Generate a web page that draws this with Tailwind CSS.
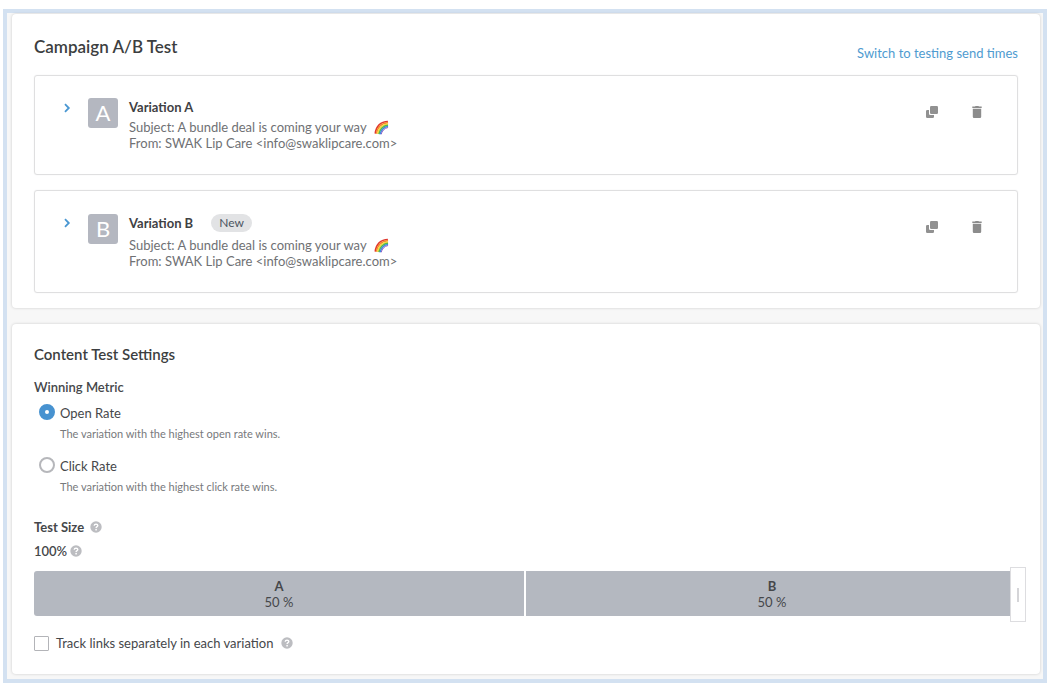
<!DOCTYPE html>
<html lang="en">
<head>
<meta charset="utf-8">
<meta name="viewport" content="width=device-width, initial-scale=1">
<title>Campaign A/B Test</title>
<script src="https://cdn.jsdelivr.net/npm/@tailwindcss/browser@4"></script>
</head>
<body class="bg-white font-['Lato',sans-serif] text-[13px] leading-4 text-[#6f7174]">
<svg class="hidden" aria-hidden="true">
  <symbol id="chevron" viewBox="0 0 8 10"><path d="M2 1.2 5.8 5 2 8.800" fill="none" stroke="#4a97d2" stroke-width="1.8"/></symbol>
  <symbol id="copy" viewBox="0 0 12 12"><rect x="4" y="0" width="8" height="8" rx="1.2" fill="#919191"/><path d="M3 4H1.200Q0 4 0 5.200V10.800Q0 12 1.200 12H6.800Q8 12 8 10.800V9H4.200Q3 9 3 7.800Z" fill="#919191"/></symbol>
  <symbol id="trash" viewBox="0 0 10 12"><path d="M0.300 .6H3L3.600 0H6.400L7 .6H9.700V1.900H.3ZM.8 2.800H9.200V10.800Q9.200 12 8 12H2Q.8 12 .8 10.800Z" fill="#8c8c8c"/></symbol>
  <symbol id="help" viewBox="0 0 12 12"><circle cx="6" cy="6" r="5.700" fill="#bcbdc1"/><path d="M4.200 4.700Q4.300 3.100 6 3.100 7.800 3.200 7.800 4.600 7.800 5.400 6.800 5.900 6.100 6.300 6.100 7" fill="none" stroke="#fff" stroke-width="1.400"/><circle cx="6.100" cy="8.700" r=".85" fill="#fff"/></symbol>
  <symbol id="rainbow" viewBox="0 0 16 16">
    <g fill="none" stroke-width="1.600">
      <path d="M1.300 14.500C2 7 7 1.500 14.800 1.500" stroke="#e0392f"/>
      <path d="M2.700 14.700C3.300 8 8 3 15 2.900" stroke="#f58a2b"/>
      <path d="M4 14.900C4.600 9 9 4.400 15 4.200" stroke="#f8d93c"/>
      <path d="M5.300 15C6 10 9.800 5.800 15 5.500" stroke="#55b947"/>
      <path d="M6.600 15.200C7.200 11 10.600 7.200 15 6.800" stroke="#3b8de0"/>
      <path d="M7.700 15.300C8.200 12 11.200 8.500 15 8" stroke="#8a54c0" stroke-width="1"/>
    </g>
  </symbol>
</svg>
<div class="mt-[9px] mr-[5px] mb-1 ml-[3px] border-4 border-[#d3e1f1] bg-[#f7f7f7] pt-px pr-[3px] pb-[5px] pl-[5px]">
  <main class="flex flex-col gap-4">
    <section class="rounded-sm bg-white px-[22px] pt-6 pb-[15px] shadow-[0_0_3px_rgba(0,0,0,0.18)]" aria-labelledby="campaign-title">
      <header class="flex h-[37px] justify-between">
        <h1 id="campaign-title" class="text-[17px] leading-[18px] font-semibold text-[#3c3e40]">Campaign A/B Test</h1>
        <a href="#" class="pt-[7px] text-[#4f9bd0]">Switch to testing send times</a>
      </header>
      <div class="flex flex-col gap-[15px]">
        <article class="flex h-[100px] items-start rounded-[3px] border border-[#dfdfe0] pt-[22px] pr-[35px] pl-7 shadow-[0_0_1px_#dfdfe0]">
          <button type="button" aria-label="Expand Variation A" class="mt-[5px] mr-[17px]"><svg class="h-[10px] w-2"><use href="#chevron"/></svg></button>
          <span class="mr-[11px] flex size-[30px] items-center justify-center rounded-[3px] bg-[#b4b7c0] text-[22px] leading-[30px] text-white">A</span>
          <div class="flex-1">
            <h2 class="mb-[3px] leading-[18px] font-bold text-[#3f4144]">Variation A</h2>
            <p class="flex items-center gap-[7px]">Subject: A bundle deal is coming your way <svg class="size-[15px]" role="img" aria-label="Rainbow"><use href="#rainbow"/></svg></p>
            <p>From: SWAK Lip Care &lt;info@swaklipcare.com&gt;</p>
          </div>
          <div class="flex gap-[34px] pt-2">
            <button type="button" aria-label="Duplicate Variation A"><svg class="size-3"><use href="#copy"/></svg></button>
            <button type="button" aria-label="Delete Variation A"><svg class="h-3 w-[10px]"><use href="#trash"/></svg></button>
          </div>
        </article>
        <article class="flex h-[103px] items-start rounded-[3px] border border-[#dfdfe0] pt-[22px] pr-[35px] pl-7 shadow-[0_0_1px_#dfdfe0]">
          <button type="button" aria-label="Expand Variation B" class="mt-[5px] mr-[17px]"><svg class="h-[10px] w-2"><use href="#chevron"/></svg></button>
          <span class="mt-px mr-[11px] flex size-[30px] items-center justify-center rounded-[3px] bg-[#b4b7c0] text-[22px] leading-[30px] text-white">B</span>
          <div class="flex-1 pt-px">
            <div class="mb-[5px] flex items-center gap-[18px]">
              <h2 class="font-bold text-[#3f4144]">Variation B</h2>
              <span class="rounded-full bg-[#e2e3e5] px-2 text-xs leading-[18px] text-[#4c5561]">New</span>
            </div>
            <p class="flex items-center gap-[7px]">Subject: A bundle deal is coming your way <svg class="size-[15px]" role="img" aria-label="Rainbow"><use href="#rainbow"/></svg></p>
            <p>From: SWAK Lip Care &lt;info@swaklipcare.com&gt;</p>
          </div>
          <div class="flex gap-[34px] pt-2">
            <button type="button" aria-label="Duplicate Variation B"><svg class="size-3"><use href="#copy"/></svg></button>
            <button type="button" aria-label="Delete Variation B"><svg class="h-3 w-[10px]"><use href="#trash"/></svg></button>
          </div>
        </article>
      </div>
    </section>

    <section class="rounded-sm bg-white px-[22px] pt-[21px] pb-[23px] text-[#45474a] shadow-[0_0_3px_rgba(0,0,0,0.18)]" aria-labelledby="settings-title">
      <h2 id="settings-title" class="text-[15px] leading-[18px] font-semibold text-[#3c3e40]">Content Test Settings</h2>
      <fieldset class="mt-4">
        <legend class="font-semibold">Winning Metric</legend>
        <div class="mt-[9px] grid grid-cols-[auto_1fr] gap-x-[5px] pl-[5px]">
          <input id="open-rate" type="radio" name="metric" checked class="size-4 appearance-none rounded-full border-2 border-[#b6b7bb] bg-white checked:border-[6px] checked:border-[#4792d0]">
          <label for="open-rate" class="pt-px leading-4">Open Rate</label>
          <p class="col-start-2 mt-[5px] text-[11px] text-[#77797c]">The variation with the highest open rate wins.</p>
        </div>
        <div class="mt-[15px] grid grid-cols-[auto_1fr] gap-x-[5px] pl-[5px]">
          <input id="click-rate" type="radio" name="metric" class="size-4 appearance-none rounded-full border-2 border-[#b6b7bb] bg-white checked:border-[6px] checked:border-[#4792d0]">
          <label for="click-rate" class="pt-px leading-4">Click Rate</label>
          <p class="col-start-2 mt-[5px] text-[11px] text-[#77797c]">The variation with the highest click rate wins.</p>
        </div>
      </fieldset>
      <div class="mt-6 flex items-center gap-[6px]">
        <h3 class="font-bold">Test Size</h3>
        <button type="button" aria-label="About test size"><svg class="size-3"><use href="#help"/></svg></button>
      </div>
      <div class="mt-2 flex items-center gap-[3px]">
        <span class="font-semibold">100%</span>
        <button type="button" aria-label="About the test percentage"><svg class="size-3"><use href="#help"/></svg></button>
      </div>
      <div class="relative mt-3 flex h-[45px] text-center">
        <div class="w-1/2 rounded-l-[3px] border-r-2 border-white bg-[#b4b8c0] pt-[7px]"><b class="block">A</b>50 %</div>
        <div class="w-1/2 bg-[#b4b8c0] pt-[7px]"><b class="block">B</b>50 %</div>
        <button type="button" role="slider" aria-label="Test size" aria-valuemin="0" aria-valuemax="100" aria-valuenow="100" class="absolute -top-1 -right-2 flex h-[55px] w-4 items-center justify-center border border-[#dddde0] bg-white"><span class="h-[14px] w-[2px] bg-[#d5d5d8]"></span></button>
      </div>
      <div class="mt-[19px] flex items-center">
        <input id="track" type="checkbox" class="size-[15px] appearance-none rounded-[1px] border border-[#b3b4b8] bg-white checked:bg-[#4792d0]">
        <label for="track" class="ml-[7px]">Track links separately in each variation</label>
        <button type="button" aria-label="About link tracking" class="ml-2"><svg class="size-3"><use href="#help"/></svg></button>
      </div>
    </section>
  </main>
</div>
</body>
</html>
